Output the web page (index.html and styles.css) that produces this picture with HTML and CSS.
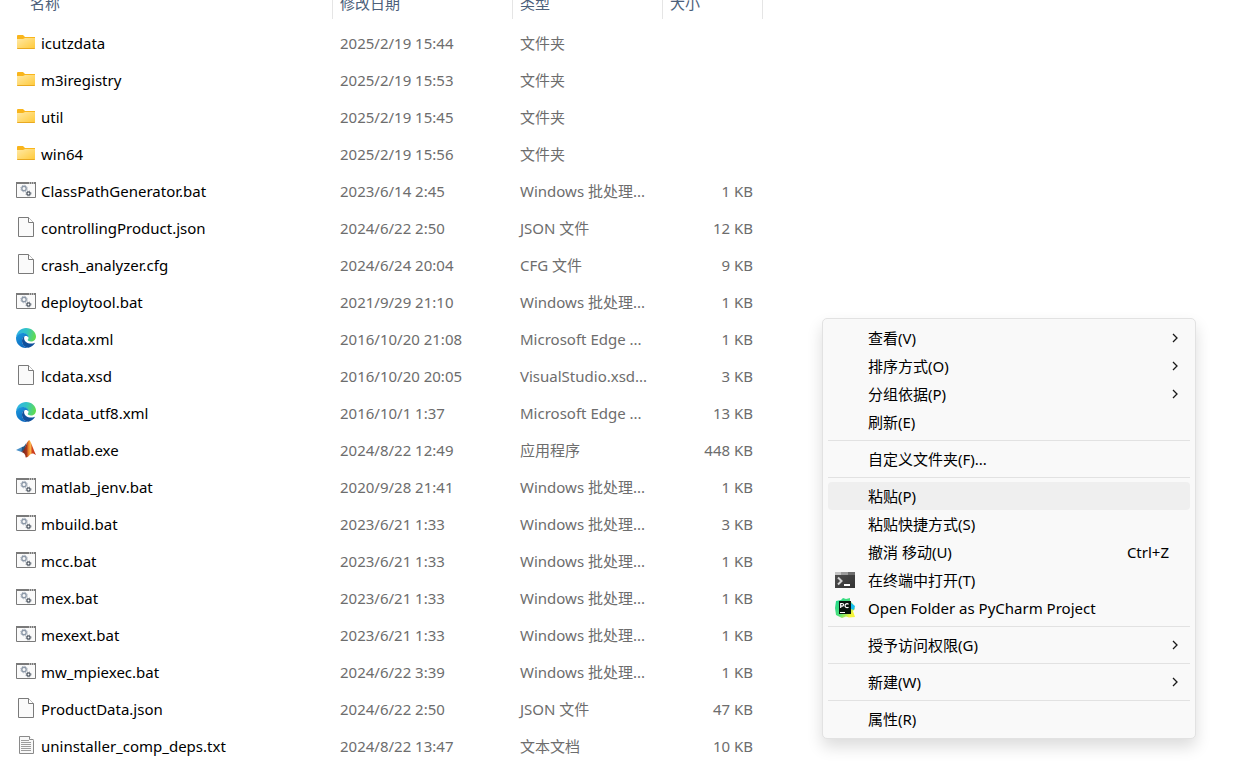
FILE: index.html
```
<!DOCTYPE html>
<html lang="zh-CN">
<head>
    <meta charset="UTF-8">
    <meta name="viewport" content="width=device-width, initial-scale=1.0">
    <title>win64</title>
    <link rel="stylesheet" href="styles.css">
</head>
<body>
    <!-- shared icons -->
    <svg class="sprite" aria-hidden="true">
        <defs>
            <linearGradient id="folderFill" x1="0" y1="0" x2="1" y2="1">
                <stop offset="0" stop-color="#ffe9a6"/>
                <stop offset="1" stop-color="#ffc937"/>
            </linearGradient>
            <linearGradient id="edgeTop" x1="0" y1="0.3" x2="1" y2="0.5">
                <stop offset="0" stop-color="#2fb3e8"/>
                <stop offset="0.5" stop-color="#33c4c4"/>
                <stop offset="1" stop-color="#62dc4c"/>
            </linearGradient>
            <linearGradient id="edgeLeft" x1="0" y1="0" x2="0.6" y2="1">
                <stop offset="0" stop-color="#1d9de0"/>
                <stop offset="1" stop-color="#0b66bd"/>
            </linearGradient>
            <linearGradient id="matlabPeak" x1="0" y1="0" x2="1" y2="0">
                <stop offset="0" stop-color="#5b1f20"/>
                <stop offset="0.35" stop-color="#a8351c"/>
                <stop offset="0.5" stop-color="#f08a2c"/>
                <stop offset="0.62" stop-color="#f9b04a"/>
                <stop offset="0.75" stop-color="#d5431c"/>
                <stop offset="1" stop-color="#b52f1c"/>
            </linearGradient>
            <linearGradient id="pyFill" x1="0" y1="0.2" x2="1" y2="1">
                <stop offset="0" stop-color="#21d789"/>
                <stop offset="0.45" stop-color="#4fe07a"/>
                <stop offset="0.8" stop-color="#f4f43c"/>
            </linearGradient>
            <linearGradient id="termFill" x1="0" y1="0" x2="1" y2="1">
                <stop offset="0" stop-color="#505050"/>
                <stop offset="1" stop-color="#333"/>
            </linearGradient>
        </defs>
        <symbol id="folder" viewBox="0 0 20 20">
            <path d="M1 4a1 1 0 0 1 1-1h5l2 2h10v4H1z" fill="#f9b51c"/>
            <path d="M1 7h6l2-1h10v10a1 1 0 0 1-1 1H2a1 1 0 0 1-1-1z" fill="url(#folderFill)"/>
            <path d="M1 16h18a1 1 0 0 1-1 1H2a1 1 0 0 1-1-1z" fill="#e9a921"/>
        </symbol>
        <symbol id="bat" viewBox="0 0 20 20">
            <path d="M.5 2.5h19v15H.5z" fill="#fafafa" stroke="#7a7a7a"/>
            <path d="M0 2h20v2H0z" fill="#7a7a7a"/>
            <path d="M13 3h1m1 0h1m1 0h1" stroke="#fff"/>
            <circle cx="8" cy="8.5" r="2.2" fill="none" stroke="#8d99a8" stroke-width="1.4"/>
            <circle cx="8" cy="8.5" r="3.3" fill="none" stroke="#a5aebb" stroke-width="1" stroke-dasharray="1.3 1.3"/>
            <circle cx="12.5" cy="13.5" r="1.6" fill="none" stroke="#4f5863" stroke-width="1.3"/>
            <circle cx="12.5" cy="13.5" r="2.5" fill="none" stroke="#5f6873" stroke-width="0.9" stroke-dasharray="1 1"/>
        </symbol>
        <symbol id="file" viewBox="0 0 20 20">
            <path d="M2.5.5h10l5 5v14h-15z" fill="#fafafa" stroke="#7a7a7a"/>
            <path d="M12.5.5v5h5" fill="#fff" stroke="#7a7a7a"/>
        </symbol>
        <symbol id="text" viewBox="0 0 20 20">
            <path d="M3.5 1.5h10l4 4v13h-14z" fill="#f8f8f8" stroke="#8a8a8a"/>
            <path d="M13.5 1.5v3h4" fill="#fff" stroke="#8a8a8a"/>
            <path d="M5 5.5h8M5 7.5h10M5 9.5h10M5 11.5h10M5 13.5h10M5 15.5h10" stroke="#9c9c9c"/>
        </symbol>
        <symbol id="edge" viewBox="0 0 20 20">
            <path d="M.1 9C.7 3.800 5 0 10 0c6 0 10 4.300 10 8.500 0 3-2.400 5-5 5-2 0-3.300-.8-3.300-1.500 0-.5.8-.7.8-2.200C12.500 7.500 10 5.500 6.500 5.500 3.500 5.500 1.200 7 .1 9z" fill="url(#edgeTop)"/>
            <path d="M.1 9C1.200 6.500 3.800 5 6.700 5c3.400 0 5.800 2.200 5.800 4.500-.5-1-1.500-1.600-2.500-1.600-2.200 0-4 2.300-4 4.900 0 3.500 2.500 6.500 6 6.900C5.500 21 0 16.500 0 10z" fill="url(#edgeLeft)"/>
            <path d="M8.500 8.300C6.800 9.300 6 11 6 12.800c0 4 3.200 7 6.500 6.900 2.800-.6 5-2.200 6.300-4.400.2-.4-.1-.6-.5-.4-1 .5-2.100.7-3.200.7-4 0-7-2.400-7-5.400 0-.7.1-1.300.4-1.900z" fill="#10509c"/>
        </symbol>
        <symbol id="matlab" viewBox="0 0 20 20">
            <path d="M0 11l6-3 2.500 1.500L5.500 13z" fill="#4a90c8"/>
            <path d="M6 8c2.500-.5 3-2 4.500-4.500L9 11l-3.500 2z" fill="#25567f"/>
            <path d="M5.500 13C9 12 10 3 13.200 1 15.500 3 17 10.500 20 16c-2-1.500-3.800-2.300-5.500-.8-1.500 1.300-2.800 3.300-4.800 3.300C9.500 15.500 8 13.500 5.500 13z" fill="url(#matlabPeak)"/>
        </symbol>
        <symbol id="terminal" viewBox="0 0 20 20">
            <path d="M0 2h20v16H0z" fill="url(#termFill)"/>
            <path d="M0 2h6v3H0z" fill="#c4c4c4"/>
            <path d="M6 2h7v3H6z" fill="#9b9b9b"/>
            <path d="M13 2h7v3h-7z" fill="#6d6d6d"/>
            <path d="M3 7.500l3.500 3.500L3 14.500" fill="none" stroke="#d5d5d5" stroke-width="2"/>
            <path d="M9 15h6" stroke="#fff" stroke-width="2"/>
        </symbol>
        <symbol id="pycharm" viewBox="0 0 20 20">
            <path d="M1 3l5-1 2-2 3 1 4-1v3l3 3 2 5-2 2 2 6-6 .5-3-1-4 1.500-6-3-1-7z" fill="url(#pyFill)"/>
            <path d="M16 5l4 3-1 4-3-1z" fill="#14bdf0"/>
            <path d="M4 3h12v13H4z" fill="#06140c"/>
            <path d="M5.700 10V5.500h1.500a1.300 1.300 0 0 1 0 2.700H5.700M13.500 6.300a2 2 0 1 0 0 2.800" fill="none" stroke="#fff" stroke-width="1.200"/>
            <path d="M5 14.500h5" stroke="#fff"/>
        </symbol>
        <symbol id="chevron" viewBox="0 0 6 10">
            <path d="M1 1l4 4-4 4" fill="none" stroke="#1a1a1a" stroke-width="1.300"/>
        </symbol>
    </svg>

    <main>
        <table class="files">
            <thead>
                <tr>
                    <th class="col-name"><div>名称</div></th>
                    <th class="col-date"><div>修改日期</div></th>
                    <th class="col-type"><div>类型</div></th>
                    <th class="col-size"><div>大小</div></th>
                </tr>
            </thead>
            <tbody id="fileList"></tbody>
        </table>
    </main>

    <ul class="menu">
        <li><button>查看(V)<svg class="chevron"><use href="#chevron"/></svg></button></li>
        <li><button>排序方式(O)<svg class="chevron"><use href="#chevron"/></svg></button></li>
        <li><button>分组依据(P)<svg class="chevron"><use href="#chevron"/></svg></button></li>
        <li><button>刷新(E)</button></li>
        <li class="separator"></li>
        <li><button>自定义文件夹(F)...</button></li>
        <li class="separator"></li>
        <li><button class="active">粘贴(P)</button></li>
        <li><button>粘贴快捷方式(S)</button></li>
        <li><button>撤消 移动(U)<span class="shortcut">Ctrl+Z</span></button></li>
        <li><button class="with-icon"><svg class="icon"><use href="#terminal"/></svg>在终端中打开(T)</button></li>
        <li><button class="with-icon"><svg class="icon"><use href="#pycharm"/></svg>Open Folder as PyCharm Project</button></li>
        <li class="separator"></li>
        <li><button>授予访问权限(G)<svg class="chevron"><use href="#chevron"/></svg></button></li>
        <li class="separator"></li>
        <li><button>新建(W)<svg class="chevron"><use href="#chevron"/></svg></button></li>
        <li class="separator"></li>
        <li><button>属性(R)</button></li>
    </ul>

    <script src="script.js"></script>
</body>
</html>
```

FILE: styles.css
```
body {
    margin: 0;
    overflow: hidden;
    background-color: #fff;
    font-family: "Noto Sans", "Noto Sans CJK SC", sans-serif;
    font-size: 15px;
    line-height: 20px;
}

.sprite {
    position: absolute;
    width: 0;
    height: 0;
}

.icon {
    width: 20px;
    height: 20px;
    flex: none;
}

/* file list, the header is scrolled partly out of view */
.files {
    width: 763px;
    margin-top: -13px;
    border-collapse: collapse;
    table-layout: fixed;
}

.files th {
    padding: 0 0 5px;
    color: #4c607a;
    font-weight: normal;
    text-align: left;
}

.files th div {
    height: 26px;
    padding: 6px 0 0 7px;
    border-right: 1px solid #e5e5e5;
}

.files .col-name div {
    padding-left: 30px;
}

.col-name {
    width: 333px;
}

.col-date {
    width: 180px;
}

.col-type {
    width: 150px;
}

.col-size {
    width: 100px;
}

.files td {
    height: 37px;
    padding: 0 10px 0 7px;
    color: #6d6d6d;
    white-space: nowrap;
    overflow: hidden;
}

.files td.name {
    padding-left: 16px;
    color: #000;
}

.files td.size {
    text-align: right;
}

.name a {
    display: flex;
    align-items: center;
    gap: 5px;
    color: inherit;
    text-decoration: none;
}

.name .icon {
    margin-bottom: 2px;
}

/* context menu */
.menu {
    position: absolute;
    top: 318px;
    left: 822px;
    width: 362px;
    margin: 0;
    padding: 5px;
    list-style: none;
    background-color: #f9f9f9;
    border: 1px solid #e2e2e2;
    border-radius: 5px;
    box-shadow: 0 8px 16px rgba(0, 0, 0, 0.14);
}

.menu button {
    display: flex;
    align-items: center;
    width: 100%;
    height: 28px;
    padding: 0 12px 0 40px;
    border: none;
    border-radius: 4px;
    background: none;
    color: #000;
    font: inherit;
    text-align: left;
}

.menu button:hover,
.menu button.active {
    background-color: #efefef;
}

.menu button.with-icon {
    padding-left: 7px;
    gap: 13px;
}

.menu .chevron {
    width: 6px;
    height: 10px;
    margin-left: auto;
}

.menu .shortcut {
    margin-left: auto;
    padding-right: 9px;
}

.separator {
    height: 1px;
    margin: 4px 0;
    background-color: #e2e2e2;
}
```

FILE: script.js
```
const files = [
    ['folder', 'icutzdata', '2025/2/19 15:44', '文件夹', ''],
    ['folder', 'm3iregistry', '2025/2/19 15:53', '文件夹', ''],
    ['folder', 'util', '2025/2/19 15:45', '文件夹', ''],
    ['folder', 'win64', '2025/2/19 15:56', '文件夹', ''],
    ['bat', 'ClassPathGenerator.bat', '2023/6/14 2:45', 'Windows 批处理...', '1 KB'],
    ['file', 'controllingProduct.json', '2024/6/22 2:50', 'JSON 文件', '12 KB'],
    ['file', 'crash_analyzer.cfg', '2024/6/24 20:04', 'CFG 文件', '9 KB'],
    ['bat', 'deploytool.bat', '2021/9/29 21:10', 'Windows 批处理...', '1 KB'],
    ['edge', 'lcdata.xml', '2016/10/20 21:08', 'Microsoft Edge ...', '1 KB'],
    ['file', 'lcdata.xsd', '2016/10/20 20:05', 'VisualStudio.xsd...', '3 KB'],
    ['edge', 'lcdata_utf8.xml', '2016/10/1 1:37', 'Microsoft Edge ...', '13 KB'],
    ['matlab', 'matlab.exe', '2024/8/22 12:49', '应用程序', '448 KB'],
    ['bat', 'matlab_jenv.bat', '2020/9/28 21:41', 'Windows 批处理...', '1 KB'],
    ['bat', 'mbuild.bat', '2023/6/21 1:33', 'Windows 批处理...', '3 KB'],
    ['bat', 'mcc.bat', '2023/6/21 1:33', 'Windows 批处理...', '1 KB'],
    ['bat', 'mex.bat', '2023/6/21 1:33', 'Windows 批处理...', '1 KB'],
    ['bat', 'mexext.bat', '2023/6/21 1:33', 'Windows 批处理...', '1 KB'],
    ['bat', 'mw_mpiexec.bat', '2024/6/22 3:39', 'Windows 批处理...', '1 KB'],
    ['file', 'ProductData.json', '2024/6/22 2:50', 'JSON 文件', '47 KB'],
    ['text', 'uninstaller_comp_deps.txt', '2024/8/22 13:47', '文本文档', '10 KB']
];

const fileList = document.getElementById('fileList');
files.forEach(([icon, name, date, type, size]) => {
    const row = document.createElement('tr');
    row.innerHTML = `
        <td class="name"><a href="#"><svg class="icon"><use href="#${icon}"/></svg>${name}</a></td>
        <td>${date}</td>
        <td>${type}</td>
        <td class="size">${size}</td>
    `;
    fileList.appendChild(row);
});
```
